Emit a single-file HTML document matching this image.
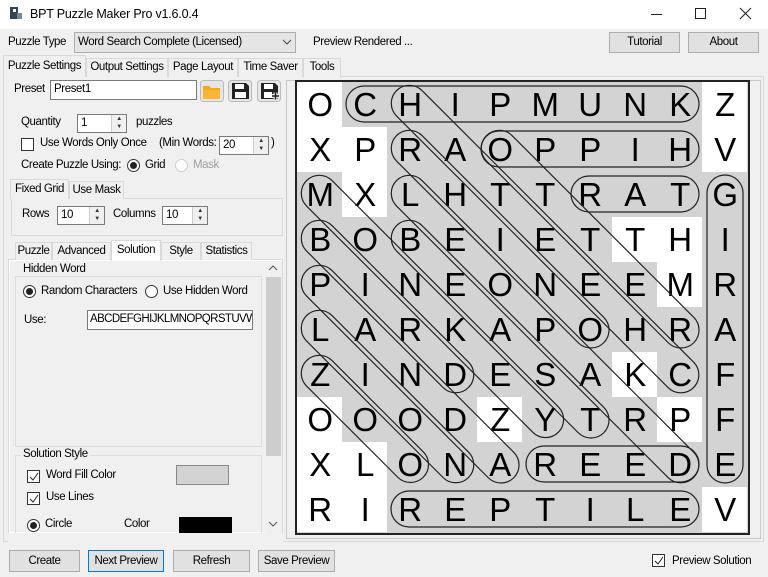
<!DOCTYPE html>
<html><head><meta charset="utf-8"><style>
*{box-sizing:border-box;margin:0;padding:0}
body{width:768px;height:577px;background:#f0f0f0;font-family:"Liberation Sans",sans-serif;font-size:11.5px;color:#000;position:relative;overflow:hidden;letter-spacing:-0.4px}
.a{position:absolute;white-space:nowrap}
.btn{position:absolute;background:#e1e1e1;border:1px solid #adadad;text-align:center;line-height:19px}
.tb{position:absolute;background:#fff;border:1px solid #7a7a7a;padding-left:3px;line-height:17px}
.spin{position:absolute;background:#fff;border:1px solid #7a7a7a;padding-left:3px;line-height:16px}
.spin i{position:absolute;right:0;top:0;bottom:0;width:15px;border-left:1px solid #ccc;background:#f0f0f0;font-style:normal;font-size:6px;line-height:8px;text-align:center;color:#333}
.tab{position:absolute;border:1px solid #d9d9d9;border-bottom:none;background:#f0f0f0;text-align:center;line-height:17px}
.cb{position:absolute;width:13px;height:13px;border:1px solid #333;background:#fff}
.rb{position:absolute;width:13px;height:13px;border:1px solid #333;border-radius:50%;background:#fff}
.rb.on:after{content:"";position:absolute;left:2px;top:2px;width:7px;height:7px;border-radius:50%;background:#222}
.grp{position:absolute;border:1px solid #dcdcdc}
</style></head><body>
<div class="a" style="left:0;top:0;width:768px;height:29px;background:#fff"></div>
<svg class="a" style="left:8px;top:5px" width="16" height="16"><rect x="2" y="2" width="8" height="12" fill="#345"/><rect x="9" y="8" width="5" height="6" fill="#789"/><rect x="5" y="4" width="3" height="3" fill="#fff"/></svg>
<div class="a" style="left:30px;top:7px;font-size:12.5px;letter-spacing:-0.2px">BPT Puzzle Maker Pro v1.6.0.4</div>
<div class="a" style="left:651px;top:14px;width:11px;height:1px;background:#222"></div>
<div class="a" style="left:695px;top:8px;width:11px;height:11px;border:1px solid #222"></div>
<svg class="a" style="left:739px;top:7px" width="13" height="13"><path d="M1 1L12 12M12 1L1 12" stroke="#222" stroke-width="1.1"/></svg>
<div class="a" style="left:8px;top:36px">Puzzle Type</div>
<div class="a" style="left:74px;top:32px;width:222px;height:21px;background:#e5e5e5;border:1px solid #adadad;padding-left:3px;line-height:19px">Word Search Complete (Licensed)</div>
<svg class="a" style="left:282px;top:39px" width="10" height="6"><path d="M1 1L5 5L9 1" fill="none" stroke="#444"/></svg>
<div class="a" style="left:313px;top:36px">Preview Rendered ...</div>
<div class="btn" style="left:609px;top:32px;width:71px;height:21px">Tutorial</div>
<div class="btn" style="left:688px;top:32px;width:71px;height:21px">About</div>
<div class="a" style="left:3px;top:76px;width:761px;height:466px;border:1px solid #d9d9d9;background:#f0f0f0"></div>
<div class="tab" style="left:86px;top:58px;width:82px;height:19px">Output Settings</div>
<div class="tab" style="left:168px;top:58px;width:70px;height:19px">Page Layout</div>
<div class="tab" style="left:238px;top:58px;width:65px;height:19px">Time Saver</div>
<div class="tab" style="left:303px;top:58px;width:38px;height:19px">Tools</div>
<div class="tab" style="left:3px;top:55px;width:83px;height:22px;line-height:20px;background:#f0f0f0">Puzzle Settings</div>
<div class="a" style="left:14px;top:83px">Preset</div>
<div class="tb" style="left:50px;top:80px;width:147px;height:20px">Preset1</div>
<svg class="a" style="left:200px;top:80px" width="24" height="22"><rect x="0.5" y="0.5" width="23" height="21" rx="3" fill="#e6e6e6" stroke="#bbb"/><path d="M3 6h6l2 2h9v11H3z" fill="#f5a623"/><path d="M3 10h17v9H3z" fill="#f9b43a"/></svg>
<svg class="a" style="left:228px;top:80px" width="24" height="22"><rect x="0.5" y="0.5" width="23" height="21" rx="3" fill="#e6e6e6" stroke="#bbb"/><path d="M4 3h14l3 3v13H4z" fill="#222"/><rect x="7" y="4" width="9" height="5" fill="#fff"/><rect x="7" y="12" width="11" height="6" fill="#fff"/></svg>
<svg class="a" style="left:257px;top:80px" width="24" height="22"><rect x="0.5" y="0.5" width="23" height="21" rx="3" fill="#e6e6e6" stroke="#bbb"/><path d="M4 3h14l3 3v13H4z" fill="#222"/><rect x="7" y="4" width="9" height="5" fill="#fff"/><rect x="7" y="12" width="8" height="6" fill="#fff"/><path d="M15 16h7M18.5 12.5v7" stroke="#e6e6e6" stroke-width="4"/><path d="M15 16h7M18.5 12.5v7" stroke="#222" stroke-width="1.5"/></svg>
<div class="a" style="left:21px;top:116px">Quantity</div>
<div class="spin" style="left:77px;top:114px;width:50px;height:19px">1<i>▲<br>▼</i></div>
<div class="a" style="left:136px;top:116px">puzzles</div>
<div class="cb" style="left:21px;top:138px;border-color:#333"></div>
<div class="a" style="left:40px;top:137px">Use Words Only Once</div>
<div class="a" style="left:159px;top:137px">(Min Words:</div>
<div class="spin" style="left:219px;top:136px;width:50px;height:19px">20<i>▲<br>▼</i></div>
<div class="a" style="left:271px;top:137px">)</div>
<div class="a" style="left:21px;top:159px">Create Puzzle Using:</div>
<div class="rb on" style="left:127px;top:159px"></div>
<div class="a" style="left:145px;top:159px">Grid</div>
<div class="rb" style="left:175px;top:159px;border-color:#ccc"></div>
<div class="a" style="left:193px;top:159px;color:#a0a0a0">Mask</div>
<div class="a" style="left:11px;top:198px;width:272px;height:38px;border:1px solid #d9d9d9;background:#f0f0f0"></div>
<div class="tab" style="left:69px;top:181px;width:55px;height:18px">Use Mask</div>
<div class="tab" style="left:10px;top:179px;width:59px;height:20px;line-height:18px">Fixed Grid</div>
<div class="a" style="left:22px;top:208px">Rows</div>
<div class="spin" style="left:57px;top:206px;width:48px;height:19px">10<i>▲<br>▼</i></div>
<div class="a" style="left:113px;top:208px">Columns</div>
<div class="spin" style="left:162px;top:206px;width:46px;height:19px">10<i>▲<br>▼</i></div>
<div class="a" style="left:8px;top:259px;width:275px;height:275px;border:1px solid #d9d9d9;background:#fff"></div>
<div class="a" style="left:10px;top:261px;width:255px;height:271px;background:#f0f0f0"></div>
<div class="tab" style="left:15px;top:242px;width:37px;height:18px">Puzzle</div>
<div class="tab" style="left:52px;top:242px;width:59px;height:18px">Advanced</div>
<div class="tab" style="left:161px;top:242px;width:40px;height:18px">Style</div>
<div class="tab" style="left:201px;top:242px;width:51px;height:18px">Statistics</div>
<div class="tab" style="left:111px;top:240px;width:50px;height:21px;background:#fff;line-height:18px">Solution</div>
<div class="a" style="left:265px;top:261px;width:17px;height:272px;background:#f0f0f0"></div>
<div class="a" style="left:266px;top:277px;width:15px;height:179px;background:#cdcdcd"></div>
<svg class="a" style="left:268px;top:265px" width="10" height="6"><path d="M1 5L5 1L9 5" fill="none" stroke="#555"/></svg>
<svg class="a" style="left:268px;top:521px" width="10" height="6"><path d="M1 1L5 5L9 1" fill="none" stroke="#555"/></svg>
<div class="grp" style="left:15px;top:276px;width:247px;height:171px"></div>
<div class="a" style="left:21px;top:263px;background:#f0f0f0;padding:0 2px">Hidden Word</div>
<div class="rb on" style="left:23px;top:285px"></div>
<div class="a" style="left:41px;top:285px">Random Characters</div>
<div class="rb" style="left:145px;top:285px"></div>
<div class="a" style="left:163px;top:285px">Use Hidden Word</div>
<div class="a" style="left:24px;top:314px">Use:</div>
<div class="tb" style="left:87px;top:310px;width:166px;height:20px;overflow:hidden;padding-left:2px;letter-spacing:-0.6px">ABCDEFGHIJKLMNOPQRSTUVW</div>
<div class="grp" style="left:15px;top:455px;width:247px;height:85px;border-bottom:none"></div>
<div class="a" style="left:21px;top:448px;background:#f0f0f0;padding:0 2px">Solution Style</div>
<div class="cb" style="left:27px;top:470px"></div><svg class="a" style="left:29px;top:472px" width="10" height="10"><path d="M1 5L4 8L9 1" fill="none" stroke="#222"/></svg>
<div class="a" style="left:46px;top:469px">Word Fill Color</div>
<div class="a" style="left:176px;top:465px;width:53px;height:20px;background:#d3d3d3;border:1px solid #888"></div>
<div class="cb" style="left:27px;top:492px"></div><svg class="a" style="left:29px;top:494px" width="10" height="10"><path d="M1 5L4 8L9 1" fill="none" stroke="#222"/></svg>
<div class="a" style="left:46px;top:491px">Use Lines</div>
<div class="rb on" style="left:27px;top:519px"></div>
<div class="a" style="left:45px;top:518px">Circle</div>
<div class="a" style="left:124px;top:518px">Color</div>
<div class="a" style="left:179px;top:517px;width:53px;height:16px;background:#000"></div>
<div class="a" style="left:8px;top:533px;width:275px;height:9px;background:#f0f0f0"></div>
<div class="a" style="left:286px;top:80px;width:475px;height:459px;border:1px solid #c8c8c8;background:#f0f0f0"></div>
<svg class="a" style="left:0;top:0" width="768" height="577">
<rect x="296" y="81" width="453" height="453" fill="#d3d3d3" stroke="#222" stroke-width="2"/>
<g fill="#fff">
<rect x="297" y="82" width="45" height="45"/><rect x="702" y="82" width="45" height="45"/>
<rect x="297" y="127" width="90" height="45"/><rect x="702" y="127" width="45" height="45"/>
<rect x="342" y="172" width="45" height="45"/>
<rect x="612" y="217" width="90" height="45"/>
<rect x="657" y="262" width="45" height="45"/>
<rect x="612" y="352" width="45" height="45"/>
<rect x="297" y="397" width="45" height="45"/><rect x="477" y="397" width="45" height="45"/><rect x="657" y="397" width="45" height="45"/>
<rect x="297" y="442" width="90" height="45"/>
<rect x="297" y="487" width="90" height="45"/><rect x="702" y="487" width="45" height="45"/>
</g>
<g font-family="Liberation Sans, sans-serif" font-size="33" text-anchor="middle" fill="#000">
<text x="320 365 410 455 500 545 590 635 680 725" y="116">OCHIPMUNKZ</text>
<text x="320 365 410 455 500 545 590 635 680 725" y="161">XPRAOPPIHV</text>
<text x="320 365 410 455 500 545 590 635 680 725" y="206">MXLHTTRATG</text>
<text x="320 365 410 455 500 545 590 635 680 725" y="251">BOBEIETTHI</text>
<text x="320 365 410 455 500 545 590 635 680 725" y="296">PINEONEEMR</text>
<text x="320 365 410 455 500 545 590 635 680 725" y="341">LARKAPOHRA</text>
<text x="320 365 410 455 500 545 590 635 680 725" y="386">ZINDESAKCF</text>
<text x="320 365 410 455 500 545 590 635 680 725" y="431">OOODZYTRPF</text>
<text x="320 365 410 455 500 545 590 635 680 725" y="476">XLONAREEDE</text>
<text x="320 365 410 455 500 545 590 635 680 725" y="521">RIREPTILEV</text>
</g>
<g fill="none" stroke="#222" stroke-width="1.2">
<rect transform="translate(365,104)" x="-19" y="-18" width="353" height="36" rx="18"/>
<rect transform="translate(500,149)" x="-19" y="-18" width="218" height="36" rx="18"/>
<rect transform="translate(590,194)" x="-19" y="-18" width="128" height="36" rx="18"/>
<rect transform="translate(545,464)" x="-19" y="-18" width="173" height="36" rx="18"/>
<rect transform="translate(410,509)" x="-19" y="-18" width="308" height="36" rx="18"/>
<rect transform="translate(725,194) rotate(90)" x="-19" y="-18" width="308" height="36" rx="18"/>
<rect transform="translate(410,104) rotate(45)" x="-19" y="-18" width="420" height="36" rx="18"/>
<rect transform="translate(410,149) rotate(45)" x="-19" y="-18" width="293" height="36" rx="18"/>
<rect transform="translate(500,149) rotate(45)" x="-19" y="-18" width="293" height="36" rx="18"/>
<rect transform="translate(320,194) rotate(45)" x="-19" y="-18" width="356" height="36" rx="18"/>
<rect transform="translate(410,194) rotate(45)" x="-19" y="-18" width="420" height="36" rx="18"/>
<rect transform="translate(410,239) rotate(45)" x="-19" y="-18" width="293" height="36" rx="18"/>
<rect transform="translate(320,239) rotate(45)" x="-19" y="-18" width="229" height="36" rx="18"/>
<rect transform="translate(320,284) rotate(45)" x="-19" y="-18" width="293" height="36" rx="18"/>
<rect transform="translate(320,329) rotate(45)" x="-19" y="-18" width="229" height="36" rx="18"/>
<rect transform="translate(320,374) rotate(45)" x="-19" y="-18" width="165" height="36" rx="18"/>
</g>
</svg>
<div class="btn" style="left:9px;top:550px;width:71px;height:22px;line-height:20px">Create</div>
<div class="btn" style="left:88px;top:550px;width:76px;height:22px;line-height:20px;border:1px solid #0078d7">Next Preview</div>
<div class="btn" style="left:173px;top:550px;width:77px;height:22px;line-height:20px">Refresh</div>
<div class="btn" style="left:258px;top:550px;width:77px;height:22px;line-height:20px">Save Preview</div>
<div class="cb" style="left:652px;top:554px"></div><svg class="a" style="left:654px;top:556px" width="10" height="10"><path d="M1 5L4 8L9 1" fill="none" stroke="#222"/></svg>
<div class="a" style="left:672px;top:555px">Preview Solution</div>
</body></html>
